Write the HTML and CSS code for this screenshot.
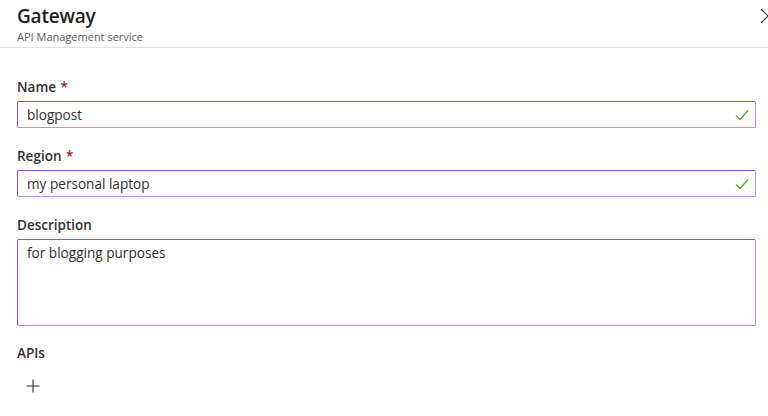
FILE: index.html
```html
<!DOCTYPE html>
<html>
<head>
<meta charset="utf-8">
<link rel="stylesheet" href="styles.css">
</head>
<body>
<div class="panel">
  <header class="header">
    <div class="titles">
      <div class="title">Gateway</div>
      <div class="subtitle">API Management service</div>
    </div>
    <div class="close" aria-label="Close">
      <svg width="16" height="16" viewBox="0 0 16 16"><path d="M1 1 L15 15 M15 1 L1 15" stroke="#323130" stroke-width="1.2" fill="none"/></svg>
    </div>
  </header>
  <main class="form">
    <div class="field">
      <div class="label">Name <span class="req">*</span></div>
      <div class="input">
        <span class="value">blogpost</span>
        <svg class="check" width="14" height="12" viewBox="0 0 14 12"><path d="M1 6.5 L5 10.5 L13 1.5" stroke="#5ca31f" stroke-width="1.3" fill="none"/></svg>
      </div>
    </div>
    <div class="field">
      <div class="label">Region <span class="req">*</span></div>
      <div class="input">
        <span class="value">my personal laptop</span>
        <svg class="check" width="14" height="12" viewBox="0 0 14 12"><path d="M1 6.5 L5 10.5 L13 1.5" stroke="#5ca31f" stroke-width="1.3" fill="none"/></svg>
      </div>
    </div>
    <div class="field">
      <div class="label">Description</div>
      <div class="input textarea">
        <span class="value">for blogging purposes</span>
      </div>
    </div>
    <div class="section">
      <div class="label">APIs</div>
      <div class="add">
        <svg width="14" height="14" viewBox="0 0 14 14"><path d="M7 0.5 V13.5 M0.5 7 H13.5" stroke="#323130" stroke-width="1.1" fill="none"/></svg>
      </div>
    </div>
  </main>
</div>
</body>
</html>
```
FILE: styles.css
```css
html, body {
  margin: 0;
  padding: 0;
  background: #ffffff;
  overflow: hidden;
}
body {
  font-family: "Segoe UI", "Open Sans", "Noto Sans", sans-serif;
  color: #323130;
  width: 768px;
  height: 416px;
}
.panel {
  display: flex;
  flex-direction: column;
}
.header {
  height: 47px;
  border-bottom: 1px solid #e1dfdd;
  display: flex;
  justify-content: space-between;
  align-items: flex-start;
  padding-left: 17px;
}
.titles {
  display: flex;
  flex-direction: column;
}
.title {
  font-size: 19px;
  font-weight: 600;
  line-height: 26px;
  margin-top: 3px;
  color: #201f1e;
  letter-spacing: -0.2px;
}
.subtitle {
  font-size: 11px;
  line-height: 15px;
  color: #605e5c;
  margin-top: 0;
}
.close {
  margin-top: 7px;
  margin-right: -8px;
  width: 16px;
  height: 16px;
}
.form {
  padding: 29px 12px 0 17px;
  display: flex;
  flex-direction: column;
}
.field {
  display: flex;
  flex-direction: column;
  margin-bottom: 18px;
}
.label {
  font-size: 13.5px;
  font-weight: 600;
  line-height: 20px;
  height: 20px;
  margin-bottom: 4px;
  color: #323130;
}
.req {
  color: #a4262c;
  margin-left: 1px;
}
.input {
  box-sizing: border-box;
  height: 27px;
  border: 1px solid #c48edb;
  border-top-color: #9e4fc8;
  border-left-color: #9e4fc8;
  border-radius: 2px;
  display: flex;
  align-items: center;
  justify-content: space-between;
  padding: 0 6px 0 9px;
  font-size: 13.6px;
  color: #323130;
}
.value {
  line-height: 20px;
}
.check {
  display: block;
}
.textarea {
  height: 87px;
  align-items: flex-start;
  padding-top: 3px;
}
.section {
  display: flex;
  flex-direction: column;
  margin-top: -1px;
}
.add {
  margin-top: 12px;
  margin-left: 9px;
  width: 14px;
  height: 14px;
}
.add svg {
  display: block;
}
```
